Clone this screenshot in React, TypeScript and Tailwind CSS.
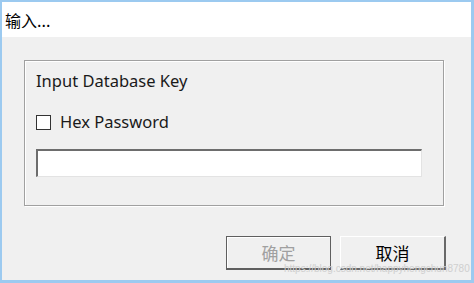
import React from "react";

export default function App() {
  return (
    <div
      className="relative w-[474px] h-[283px] flex flex-col bg-[#f0f0f0] border-t-2 border-l-2 border-r-[3px] border-b-[3px] border-[#9ccaf0] overflow-hidden"
      style={{ fontFamily: '"Noto Sans", "Noto Sans CJK SC", sans-serif' }}
    >
      <div className="h-[35px] bg-white flex items-center pl-[3px] text-[16px] text-black leading-none" style={{ fontFamily: '"Noto Sans CJK SC", "Noto Sans", sans-serif' }}>
        输入...
      </div>
      <div className="flex-1 flex flex-col pl-[22px] pr-[27px] pt-[23px]">
        <div className="h-[146px] border border-[#a0a0a0] shadow-[inset_1px_1px_0_#fff,1px_1px_0_#fff] flex flex-col pl-[11px] pr-[21px] pt-[9px]">
          <div className="text-[16.5px] leading-[22px] text-[#1a1a1a]">Input Database Key</div>
          <div className="mt-[19px] flex items-center gap-[9px]">
            <div className="w-[15px] h-[15px] bg-white border border-[#333]" />
            <span className="text-[16.5px] leading-[22px] text-[#1a1a1a]">Hex Password</span>
          </div>
          <div className="mt-[16px] h-[28px] bg-white border-t-2 border-l-2 border-b border-r border-t-[#6d6d6d] border-l-[#6d6d6d] border-b-[#e3e3e3] border-r-[#e3e3e3]" />
        </div>
        <div className="mt-[30px] flex justify-end gap-[9px] mr-[-2px]">
          <div
            className="w-[105px] h-[34px] flex items-center justify-center bg-[#f0f0f0] border border-b-2 border-[#5f5f5f] shadow-[inset_1px_1px_0_#fff] text-[17px] text-[#a0a0a0]"
            style={{ fontFamily: '"Noto Sans CJK SC", sans-serif' }}
          >
            确定
          </div>
          <div
            className="w-[106px] h-[34px] flex items-center justify-center bg-[#f0f0f0] border-t border-l border-r-2 border-b-2 border-t-white border-l-white border-r-[#696969] border-b-[#696969] text-[17px] text-black"
            style={{ fontFamily: '"Noto Sans CJK SC", sans-serif' }}
          >
            取消
          </div>
        </div>
      </div>
      <div className="absolute left-[282px] top-[262px] text-[10px] leading-none text-[#cfcfcf]" style={{ fontFamily: '"Liberation Sans", sans-serif' }}>
        https://blog.csdn.net/happyhengchun8780
      </div>
    </div>
  );
}
